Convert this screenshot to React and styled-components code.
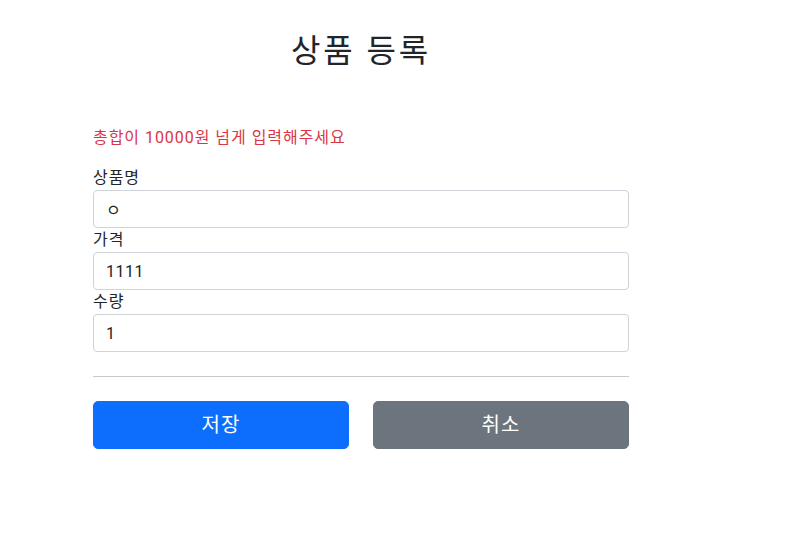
import React, { useState } from "react";
import styled, { createGlobalStyle } from "styled-components";

const GlobalStyle = createGlobalStyle`
    body {
        margin: 0;
        background: #fff;
        color: #212529;
        font-family: Roboto, "Noto Sans CJK KR", sans-serif;
        font-size: 16px;
        line-height: 1.5;
        letter-spacing: 0.06em;
    }
    * {
        box-sizing: border-box;
    }
`;

const Container = styled.div`
    width: 560px;
    margin-left: 81px;
    padding: 0 12px;
`;
const Header = styled.div`
    padding: 32px 0 48px;
    text-align: center;
`;
const Title = styled.h2`
    margin: 0 0 8px;
    font-size: 32px;
    font-weight: 400;
    line-height: 1.2;
    letter-spacing: 0.09em;
`;
const FieldError = styled.p`
    margin: 0 0 16px;
    color: #dc3545;
`;
const Form = styled.form`
    display: flex;
    flex-direction: column;
`;
const Label = styled.label`
    display: block;
`;
const Input = styled.input`
    display: block;
    width: 100%;
    height: 38px;
    padding: 6px 12px;
    font-family: inherit;
    font-size: 16px;
    line-height: 1.5;
    letter-spacing: 0.03em;
    color: #212529;
    background-color: #fff;
    border: 1px solid #ced4da;
    border-radius: 4px;
    outline: none;
`;
const Divider = styled.hr`
    margin: 24px 0;
    border: 0;
    border-top: 1px solid #c8c8c8;
`;
const Row = styled.div`
    display: grid;
    grid-template-columns: 1fr 1fr;
    gap: 24px;
`;
const Button = styled.button`
    width: 100%;
    height: 48px;
    padding: 8px 16px;
    font-family: inherit;
    font-size: 20px;
    line-height: 1.5;
    letter-spacing: 0.06em;
    color: #fff;
    background-color: ${(p) => (p.$secondary ? "#6c757d" : "#0d6efd")};
    border: 1px solid ${(p) => (p.$secondary ? "#6c757d" : "#0d6efd")};
    border-radius: 5px;
    cursor: pointer;
`;

const App = () => {
    const [itemName, setItemName] = useState("ㅇ");
    const [price, setPrice] = useState("1111");
    const [quantity, setQuantity] = useState("1");

    return (
        <>
            <GlobalStyle />
            <Container>
                <Header>
                    <Title>상품 등록</Title>
                </Header>
                <Form onSubmit={(e) => e.preventDefault()}>
                    <FieldError>총합이 10000원 넘게 입력해주세요</FieldError>
                    <Label htmlFor="itemName">상품명</Label>
                    <Input
                        id="itemName"
                        value={itemName}
                        onChange={(e) => setItemName(e.target.value)}
                    />
                    <Label htmlFor="price">가격</Label>
                    <Input
                        id="price"
                        value={price}
                        onChange={(e) => setPrice(e.target.value)}
                    />
                    <Label htmlFor="quantity">수량</Label>
                    <Input
                        id="quantity"
                        value={quantity}
                        onChange={(e) => setQuantity(e.target.value)}
                    />
                    <Divider />
                    <Row>
                        <Button type="submit">저장</Button>
                        <Button type="button" $secondary>
                            취소
                        </Button>
                    </Row>
                </Form>
            </Container>
        </>
    );
};

export default App;
